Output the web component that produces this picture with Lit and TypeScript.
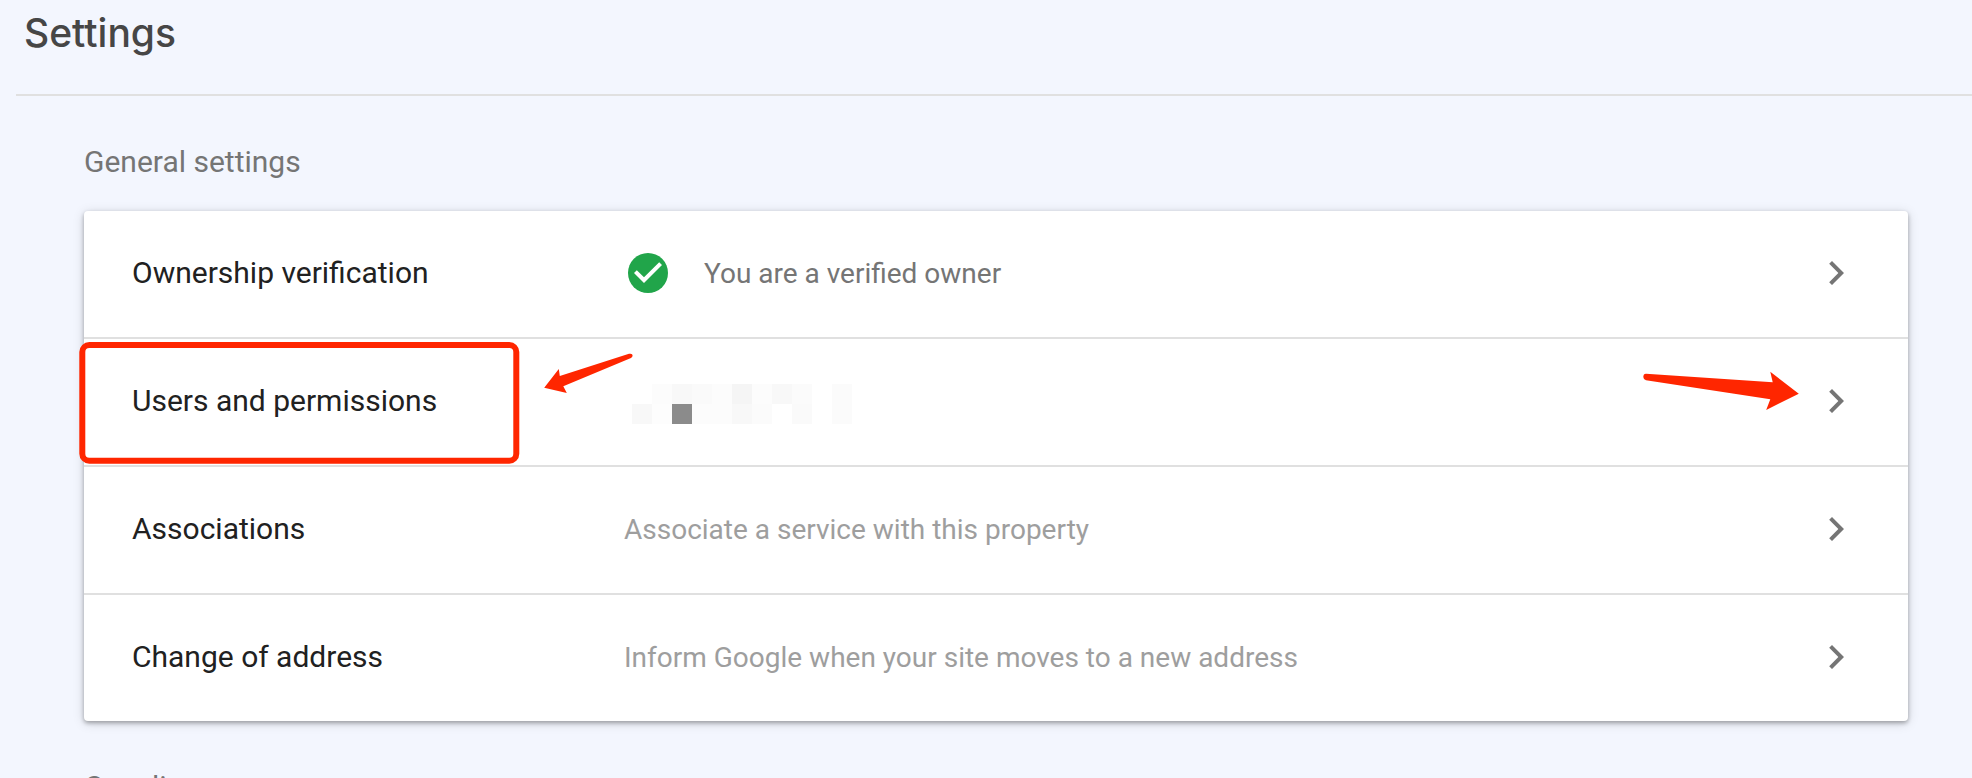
import { LitElement, html, css, svg } from "lit";

const MOSAIC: string[][] = [
  ["#fff", "#fcfcfc", "#f8f8f8", "#fafafa", "#fcfcfc", "#f5f5f5", "#fcfcfc", "#f8f8f8", "#fbfbfb", "#fff", "#fbfbfb"],
  ["#f8f8f8", "#fdfdfd", "#8b8b8b", "#fcfcfc", "#fcfcfc", "#f8f8f8", "#fbfbfb", "#fff", "#fafafa", "#fff", "#fbfbfb"],
];

interface Row {
  label: string;
  kind: "verified" | "mosaic" | "hint";
  text?: string;
}

const ROWS: Row[] = [
  { label: "Ownership verification", kind: "verified", text: "You are a verified owner" },
  { label: "Users and permissions", kind: "mosaic" },
  { label: "Associations", kind: "hint", text: "Associate a service with this property" },
  { label: "Change of address", kind: "hint", text: "Inform Google when your site moves to a new address" },
];

class SettingsRow extends LitElement {
  static properties = { row: { attribute: false } };
  declare row: Row;

  static styles = css`
    :host {
      display: flex;
      align-items: center;
      box-sizing: border-box;
      height: 126px;
      padding: 0 48px 2px;
      font-family: Roboto, sans-serif;
    }
    .label {
      width: 492px;
      flex: none;
      font-size: 30px;
      line-height: 40px;
      color: #212121;
    }
    .detail {
      flex: 1;
      display: flex;
      align-items: center;
      gap: 32px;
      font-size: 28px;
      line-height: 40px;
      color: #757575;
    }
    .text {
      padding-top: 2px;
    }
    .hint {
      color: #9e9e9e;
    }
    .icon {
      display: block;
      flex: none;
      width: 48px;
      height: 48px;
    }
    .check {
      fill: #21a54a;
    }
    .chevron {
      fill: #757575;
    }
    .mosaic {
      display: grid;
      grid-template-columns: repeat(11, 20px);
      grid-auto-rows: 20px;
      padding: 6px 0 0 8px;
    }
  `;

  detail() {
    const { kind, text } = this.row;
    if (kind === "mosaic") {
      return html`<div class="mosaic">
        ${MOSAIC.flat().map((c) => html`<span style="background:${c}"></span>`)}
      </div>`;
    }
    if (kind === "verified") {
      return html`<svg class="icon check" viewBox="0 0 24 24">
          <circle cx="12" cy="12" r="10" />
          <path fill="#fff" d="M10 17l-5-5 1.41-1.41L10 14.17l7.59-7.59L19 8z" />
        </svg>
        <span class="text">${text}</span>`;
    }
    return html`<span class="text hint">${text}</span>`;
  }

  render() {
    return html`
      <div class="label">${this.row.label}</div>
      <div class="detail">${this.detail()}</div>
      <svg class="icon chevron" viewBox="0 0 24 24">
        <path d="M10 6L8.59 7.41 13.17 12l-4.58 4.59L10 18l6-6z" />
      </svg>
    `;
  }
}
customElements.define("settings-row", SettingsRow);

class AppRoot extends LitElement {
  static styles = css`
    :host {
      display: block;
      position: relative;
      box-sizing: border-box;
      height: 778px;
      overflow: hidden;
      background: #f3f6fe;
      font-family: Roboto, sans-serif;
    }
    .header {
      box-sizing: border-box;
      height: 96px;
      margin-left: 16px;
      padding: 9px 0 0 8px;
      border-bottom: 2px solid #e0e0e0;
    }
    .title {
      margin: 0;
      font: 500 39px/48px Inter, sans-serif;
      color: #464646;
    }
    .section {
      padding: 46px 64px 0 84px;
    }
    .heading {
      margin: 0;
      font-size: 30px;
      font-weight: 400;
      line-height: 40px;
      color: #757575;
    }
    .card {
      margin-top: 29px;
      background: #fff;
      border-radius: 4px;
      box-shadow: 0 2px 4px rgba(0, 0, 0, 0.3), 0 2px 12px rgba(0, 0, 0, 0.15);
    }
    .card settings-row + settings-row {
      box-sizing: content-box;
      height: 124px;
      border-top: 2px solid #e0e0e0;
    }
    .marks {
      position: absolute;
      inset: 0;
      width: 1972px;
      height: 778px;
      pointer-events: none;
    }
  `;

  render() {
    return html`
      <header class="header"><h1 class="title">Settings</h1></header>
      <section class="section">
        <h2 class="heading">General settings</h2>
        <div class="card">
          ${ROWS.map((row) => html`<settings-row .row=${row}></settings-row>`)}
        </div>
      </section>
      <section class="section">
        <h2 class="heading">Crawling</h2>
      </section>
      <svg class="marks" viewBox="0 0 1972 778" fill="#ff2600">
        <rect x="82.3" y="345" width="434" height="115.8" rx="7" fill="none" stroke="#ff2600" stroke-width="6" />
        ${svg`
          <path d="M544.2 387.8L558.8 369L559.8 376L629 353.8Q631.5 353.2 632.6 355Q632.8 357 631 358L563.3 386.2L566.8 393Z" />
          <path d="M1798.8 393.7L1770.3 371.7L1772.7 382.3L1646 373.7Q1643.3 373.8 1643.3 377Q1643.5 379.8 1646 380.2L1770.3 399.2L1766.2 410Z" />
        `}
      </svg>
    `;
  }
}
customElements.define("app-root", AppRoot);
